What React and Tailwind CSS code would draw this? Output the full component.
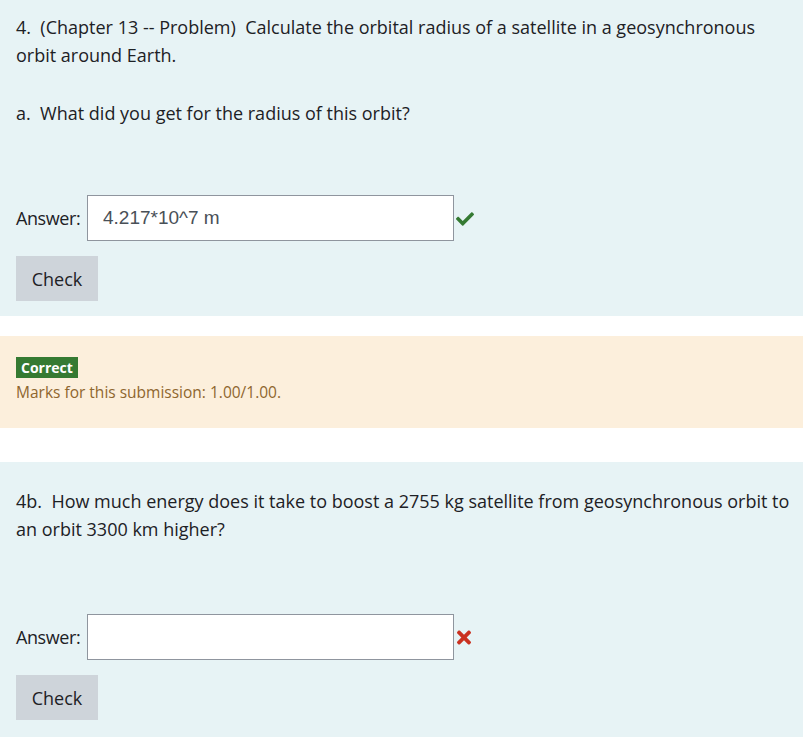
const font = { fontFamily: '"Open Sans", "Noto Sans", sans-serif' };

function CheckIcon() {
  return (
    <svg width="18" height="15" viewBox="0 0 512 420" className="ml-[2px]">
      <path
        fill="#357a32"
        d="M173.9 407.6L7.5 241.2c-10-10-10-26.2 0-36.2l36.2-36.2c10-10 26.2-10 36.2 0L192 280.9 432.1 40.8c10-10 26.2-10 36.2 0l36.2 36.2c10 10 10 26.2 0 36.2L210.1 407.6c-10 10-26.2 10-36.2 0z"
      />
    </svg>
  );
}

function XIcon() {
  return (
    <svg width="14" height="15" viewBox="0 0 352 352" className="ml-[3px]">
      <path
        fill="#ca3120"
        d="M242.7 176L342.8 75.9c12.3-12.3 12.3-32.2 0-44.5L320.6 9.2c-12.3-12.3-32.2-12.3-44.5 0L176 109.3 75.9 9.2C63.6-3.1 43.7-3.1 31.4 9.2L9.2 31.4c-12.3 12.3-12.3 32.2 0 44.5L109.3 176 9.2 276.1c-12.3 12.3-12.3 32.2 0 44.5l22.2 22.2c12.3 12.3 32.2 12.3 44.5 0L176 242.7l100.1 100.1c12.3 12.3 32.2 12.3 44.5 0l22.2-22.2c12.3-12.3 12.3-32.2 0-44.5L242.7 176z"
      />
    </svg>
  );
}

function AnswerRow({ value, status, className }) {
  return (
    <div className={"flex items-center " + className}>
      <span className="w-[71px] tracking-[-0.4px]">Answer:</span>
      <div
        className="w-[367px] h-[46px] bg-white border border-[#8f959e] flex items-center pl-[15px] text-[19px] text-[#495057]"
        style={{ fontFamily: '"Liberation Sans", Arial, sans-serif' }}
      >
        {value}
      </div>
      {status === "ok" ? <CheckIcon /> : <XIcon />}
    </div>
  );
}

function CheckButton() {
  return (
    <button className="mt-[15px] h-[45px] w-[82px] bg-[#ced4da] text-[#1d2125] block">
      Check
    </button>
  );
}

export default function App() {
  return (
    <div className="w-[803px] h-[737px] bg-white text-[18px] leading-[28px] text-[#1d2125] overflow-hidden" style={font}>
      <div className="bg-[#e7f3f5] pt-[13px] pb-[15px] pl-[16px] pr-[8px]">
        <p>4.&nbsp; (Chapter 13 -- Problem)&nbsp; Calculate the orbital radius of a satellite in a geosynchronous orbit around Earth.</p>
        <p className="mt-[30px]">a.&nbsp; What did you get for the radius of this orbit?</p>
        <AnswerRow value="4.217*10^7 m" status="ok" className="mt-[68px]" />
        <CheckButton />
      </div>

      <div className="mt-[20px] bg-[#fcefdc] h-[92px] pt-[21px] px-[16px]">
        <div className="w-fit bg-[#357a32] text-white text-[14px] font-bold leading-[21px] px-[5px]">Correct</div>
        <p className="text-[15.5px] leading-[22px] text-[#8e662e] mt-[3px]">Marks for this submission: 1.00/1.00.</p>
      </div>

      <div className="mt-[34px] bg-[#e7f3f5] pt-[25px] pb-[18px] pl-[16px] pr-[6px]">
        <p>4b.&nbsp; How much energy does it take to boost a 2755 kg satellite from geosynchronous orbit to an orbit 3300 km higher?</p>
        <AnswerRow value="" status="bad" className="mt-[71px]" />
        <CheckButton />
      </div>
    </div>
  );
}
